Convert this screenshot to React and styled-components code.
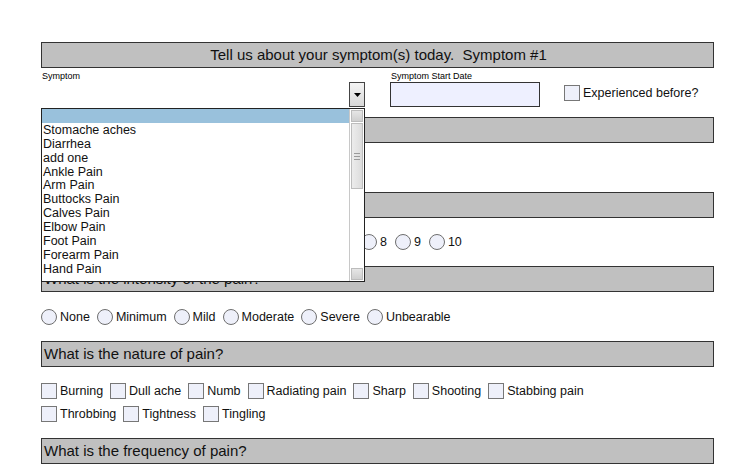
import React from "react";
import styled, { createGlobalStyle } from "styled-components";

const GlobalStyle = createGlobalStyle`
	body {
		margin: 0;
		background: #ffffff;
		font-family: "Liberation Sans", Arial, sans-serif;
		color: #000;
	}
`;

const symptoms = [
	"",
	"Stomache aches",
	"Diarrhea",
	"add one",
	"Ankle Pain",
	"Arm Pain",
	"Buttocks Pain",
	"Calves Pain",
	"Elbow Pain",
	"Foot Pain",
	"Forearm Pain",
	"Hand Pain",
];

const intensity = ["None", "Minimum", "Mild", "Moderate", "Severe", "Unbearable"];
const natureRow1 = ["Burning", "Dull ache", "Numb", "Radiating pain", "Sharp", "Shooting", "Stabbing pain"];
const natureRow2 = ["Throbbing", "Tightness", "Tingling"];
// the lower part of the scale sits under the open list
const scale = ["8", "9", "10"];

const App = () => {
	return (
		<>
			<GlobalStyle />
			<Page>
				<Bar center>{"Tell us about your symptom(s) today.  Symptom #1"}</Bar>
				<FieldRow>
					<SymptomField>
						<Label>Symptom</Label>
						<SelectBox>
							<ArrowButton>
								<svg width="7" height="4" viewBox="0 0 7 4">
									<path d="M0 0 L7 0 L3.5 4 Z" fill="#000" />
								</svg>
							</ArrowButton>
						</SelectBox>
					</SymptomField>
					<DateField>
						<Label>Symptom Start Date</Label>
						<DateInput />
					</DateField>
					<CheckItem big>
						<Box />
						<span>Experienced before?</span>
					</CheckItem>
				</FieldRow>
				<Bar />
				<Spacer />
				<Bar />
				<ScaleRow>
					{scale.map((n) => (
						<RadioItem key={n}>
							<Circle />
							<span>{n}</span>
						</RadioItem>
					))}
				</ScaleRow>
				<Bar>What is the intensity of the pain?</Bar>
				<RadioRow>
					{intensity.map((t) => (
						<RadioItem key={t}>
							<Circle />
							<span>{t}</span>
						</RadioItem>
					))}
				</RadioRow>
				<Bar>What is the nature of pain?</Bar>
				<CheckGroup>
					<CheckRow>
						{natureRow1.map((t) => (
							<CheckItem key={t}>
								<Box />
								<span>{t}</span>
							</CheckItem>
						))}
					</CheckRow>
					<CheckRow>
						{natureRow2.map((t) => (
							<CheckItem key={t}>
								<Box />
								<span>{t}</span>
							</CheckItem>
						))}
					</CheckRow>
				</CheckGroup>
				<Bar>What is the frequency of pain?</Bar>

				<ListBox>
					<Options>
						{symptoms.map((s, i) => (
							<Option key={i} selected={i === 0}>
								{s}
							</Option>
						))}
					</Options>
					<ScrollBar>
						<ScrollBtn />
						<Track>
							<Thumb>
								<Grip />
							</Thumb>
						</Track>
						<ScrollBtn />
					</ScrollBar>
				</ListBox>
			</Page>
		</>
	);
};

const Page = styled.div`
	position: relative;
	width: 673px;
	padding: 42px 0 0 41px;
`;

const Bar = styled.div`
	box-sizing: border-box;
	height: 26px;
	background: #c0c0c0;
	border: 1px solid #333;
	font-size: 15px;
	line-height: 24px;
	padding-left: 2px;
	white-space: pre;
	text-align: ${(p) => (p.center ? "center" : "left")};
	color: #111;
`;

const FieldRow = styled.div`
	display: flex;
	align-items: flex-start;
	height: 49px;
`;

const Label = styled.div`
	font-size: 9px;
	line-height: 10px;
	height: 10px;
	margin: 3px 0 1px 1px;
`;

const SymptomField = styled.div`
	width: 324px;
`;

const SelectBox = styled.div`
	display: flex;
	justify-content: flex-end;
	height: 25px;
	background: #fff;
`;

const ArrowButton = styled.div`
	box-sizing: border-box;
	width: 16px;
	height: 25px;
	border: 1px solid #444;
	background: linear-gradient(#f4f4f4, #d8d8d8);
	display: flex;
	align-items: center;
	justify-content: center;
`;

const DateField = styled.div`
	width: 150px;
	margin-left: 25px;
`;

const DateInput = styled.div`
	box-sizing: border-box;
	height: 25px;
	border: 1px solid #333;
	background: #eef0ff;
`;

const Spacer = styled.div`
	height: 49px;
`;

const RadioRow = styled.div`
	box-sizing: border-box;
	display: flex;
	align-items: center;
	gap: 7px;
	height: 49px;
	padding-top: 1px;
	font-size: 12.5px;
`;

const ScaleRow = styled(RadioRow)`
	height: 48px;
	padding-top: 0;
	gap: 8px;
	padding-left: 320px;
`;

const RadioItem = styled.div`
	display: flex;
	align-items: center;
	gap: 3px;
	color: #111;
`;

const Circle = styled.span`
	box-sizing: border-box;
	width: 16px;
	height: 16px;
	border-radius: 50%;
	border: 1px solid #6e6e6e;
	background: #eef0fa;
`;

const CheckGroup = styled.div`
	display: flex;
	flex-direction: column;
	gap: 7px;
	padding: 16px 0;
`;

const CheckRow = styled.div`
	display: flex;
	align-items: center;
	gap: 7px;
	font-size: 12.5px;
`;

const CheckItem = styled.div`
	display: flex;
	align-items: center;
	gap: 3px;
	font-size: 12.5px;
	margin: ${(p) => (p.big ? "0 0 0 24px" : "0")};
	height: ${(p) => (p.big ? "30px" : "16px")};
	padding-top: ${(p) => (p.big ? "10px" : "0")};
	color: #111;
`;

const Box = styled.span`
	box-sizing: border-box;
	width: 16px;
	height: 16px;
	border: 1px solid #777;
	background: #eef0fa;
`;

const ListBox = styled.div`
	position: absolute;
	left: 41px;
	top: 108px;
	box-sizing: border-box;
	width: 324px;
	height: 174px;
	border: 1px solid #222;
	background: #fff;
	display: flex;
	overflow: hidden;
`;

const Options = styled.div`
	flex: 1;
	overflow: hidden;
`;

const Option = styled.div`
	height: 13.9px;
	line-height: 15px;
	font-size: 12.5px;
	padding-left: 1px;
	white-space: nowrap;
	background: ${(p) => (p.selected ? "#99c1dc" : "transparent")};
	color: #111;
`;

const ScrollBar = styled.div`
	width: 14px;
	display: flex;
	flex-direction: column;
	border-left: 1px solid #c8c8c8;
	background: #fff;
`;

const ScrollBtn = styled.div`
	height: 10px;
	margin: 1px;
	border: 1px solid #bcbcbc;
	background: linear-gradient(#e6e6e6, #cfcfcf);
`;

const Track = styled.div`
	flex: 1;
	padding: 0 1px;
`;

const Thumb = styled.div`
	box-sizing: border-box;
	height: 66px;
	border: 1px solid #bdbdbd;
	background: linear-gradient(90deg, #ececec, #dcdcdc);
	display: flex;
	align-items: center;
	justify-content: center;
`;

const Grip = styled.div`
	width: 6px;
	height: 5px;
	border-top: 1px solid #9a9a9a;
	border-bottom: 1px solid #9a9a9a;
	position: relative;
	&::after {
		content: "";
		position: absolute;
		left: 0;
		right: 0;
		top: 2px;
		border-top: 1px solid #9a9a9a;
	}
`;

export default App;
